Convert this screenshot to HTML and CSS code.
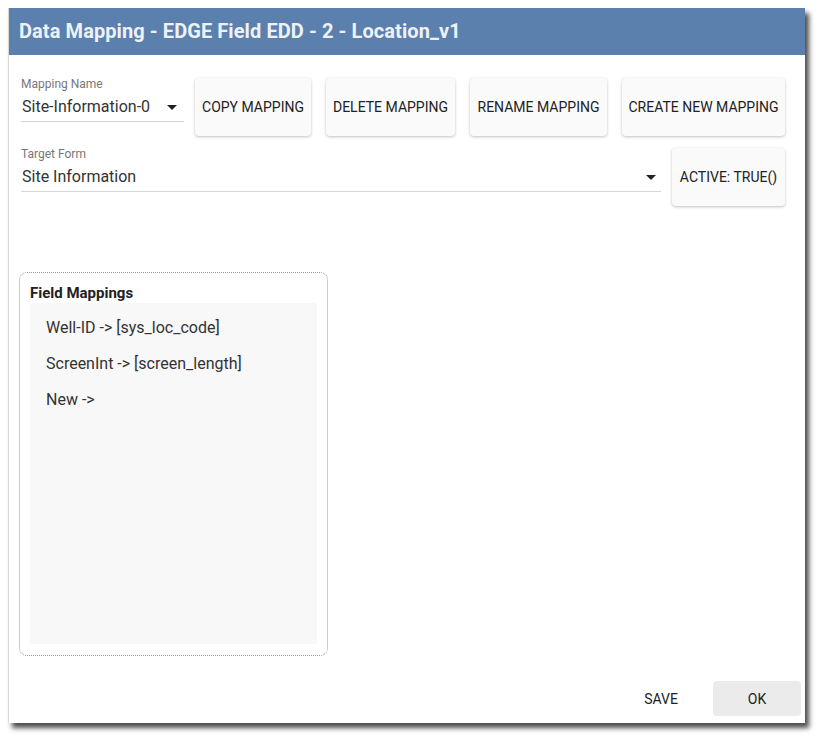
FILE: index.html
```html
<!DOCTYPE html>
<html lang="en">
<head>
  <meta charset="UTF-8" />
  <title>Data Mapping</title>
  <link rel="stylesheet" href="styles.css">
</head>
<body>
  <div class="dialog">
    <header class="dialog-title">Data Mapping - EDGE Field EDD - 2 - Location_v1</header>

    <div class="dialog-content">
      <!-- Selección de mapping y acciones -->
      <div class="row">
        <div class="field field-name">
          <label>Mapping Name</label>
          <div class="select">
            <span>Site-Information-0</span>
            <span class="caret"></span>
          </div>
        </div>
        <button class="btn btn-copy">Copy Mapping</button>
        <button class="btn btn-delete">Delete Mapping</button>
        <button class="btn btn-rename">Rename Mapping</button>
        <button class="btn btn-create">Create New Mapping</button>
      </div>

      <div class="row">
        <div class="field field-form">
          <label>Target Form</label>
          <div class="select">
            <span>Site Information</span>
            <span class="caret"></span>
          </div>
        </div>
        <button class="btn btn-active">Active: TRUE()</button>
      </div>

      <!-- Lista de mappings de campos -->
      <section class="mappings">
        <h3>Field Mappings</h3>
        <ul>
          <li>Well-ID -&gt; [sys_loc_code]</li>
          <li>ScreenInt -&gt; [screen_length]</li>
          <li>New -&gt;</li>
        </ul>
      </section>
    </div>

    <footer class="dialog-actions">
      <button class="text-btn">Save</button>
      <button class="text-btn ok">OK</button>
    </footer>
  </div>
</body>
</html>
```

FILE: styles.css
```css
*, *::before, *::after {
  box-sizing: border-box;
  margin: 0;
  padding: 0;
}

body {
  background: #fff;
  font-family: Roboto, "Liberation Sans", sans-serif;
  color: #222;
  min-height: 740px;
}

/* Caja del diálogo con sombra dura abajo a la derecha */
.dialog {
  width: 797px;
  height: 715px;
  margin: 8px 0 0 8px;
  background: #fff;
  border-left: 1px solid #d8d8d8;
  box-shadow: 4px 5px 5px rgba(0,0,0,.7);
  display: flex;
  flex-direction: column;
}

.dialog-title {
  height: 47px;
  background: #5b80ad;
  color: #eef2f7;
  font-size: 20px;
  font-weight: 700;
  letter-spacing: .08px;
  line-height: 47px;
  padding-left: 10px;
}

.dialog-content {
  flex: 1;
  padding: 23px 20px 0 10px;
}

.row {
  display: flex;
  align-items: stretch;
  gap: 15px;
  margin-left: 2px;
  margin-bottom: 12px;
}

/* Campos select con etiqueta pequeña */
.field {
  display: flex;
  flex-direction: column;
  justify-content: flex-start;
  border-bottom: 1px solid #d6d6d6;
  height: 44px;
  margin-right: -4px;
}
.field label {
  font-size: 12px;
  color: #777;
  line-height: 14px;
  margin-top: -1px;
}
.field-name { width: 163px; }
.field-form { width: 640px; }
.select {
  display: flex;
  align-items: center;
  justify-content: space-between;
  font-size: 16px;
  color: #333;
  padding: 7px 7px 0 1px;
  line-height: 18px;
}
.caret {
  width: 0;
  height: 0;
  border-left: 5px solid transparent;
  border-right: 5px solid transparent;
  border-top: 5px solid #222;
}
.field-form .select { padding-right: 5px; }

.btn {
  height: 58px;
  background: #fafafa;
  border: none;
  border-radius: 4px;
  box-shadow: 0 1px 3px rgba(0,0,0,.25);
  font-family: inherit;
  font-size: 14px;
  font-weight: 400;
  color: #222;
  text-transform: uppercase;
  padding: 0 6px;
  white-space: nowrap;
}
.btn-copy { width: 116px; }
.btn-delete { width: 129px; }
.btn-rename { width: 137px; }
.btn-create { width: 163px; }
.btn-active { width: 113px; }

/* Panel de mappings */
.mappings {
  margin-top: 66px;
  width: 309px;
  height: 384px;
  border: 1px dotted #999;
  border-radius: 8px;
  padding: 12px 10px 11px;
  display: flex;
  flex-direction: column;
}
.mappings h3 {
  font-size: 15px;
  font-weight: 700;
  color: #222;
  line-height: 16px;
  margin-bottom: 2px;
}
.mappings ul {
  flex: 1;
  list-style: none;
  background: #f8f8f8;
  padding: 16px 16px;
}
.mappings li {
  font-size: 16px;
  color: #333;
  line-height: 18px;
  margin-bottom: 18px;
}

.dialog-actions {
  display: flex;
  justify-content: flex-end;
  gap: 8px;
  padding: 0 4px 7px 0;
}
.text-btn {
  width: 88px;
  height: 35px;
  background: none;
  border: none;
  border-radius: 4px;
  font-family: inherit;
  font-size: 14px;
  font-weight: 400;
  color: #222;
  text-transform: uppercase;
}
.text-btn.ok {
  background: #ebebeb;
}
```
